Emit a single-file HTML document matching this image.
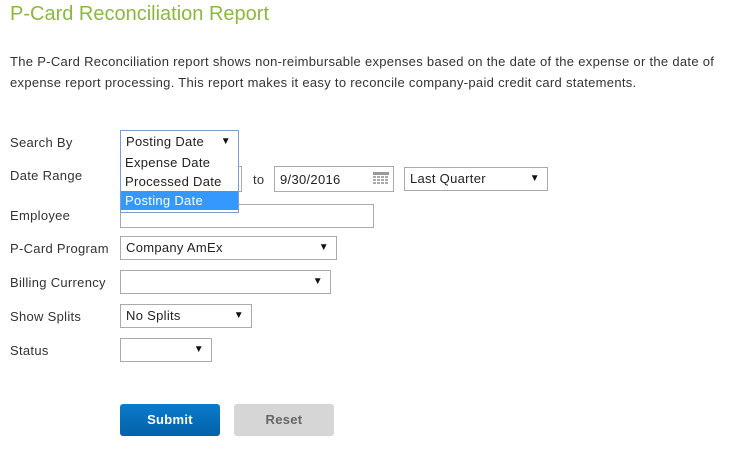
<!DOCTYPE html>
<html><head><style>
body{margin:0;width:730px;height:454px;background:#fff;font-family:"Liberation Sans",sans-serif;color:#333;position:relative;overflow:hidden;letter-spacing:0.3px}
.a{position:absolute}
h1{position:absolute;left:10px;top:3px;margin:0;font-weight:normal;font-size:20px;color:#8cb83f;letter-spacing:0}
p{position:absolute;left:10px;top:51px;margin:0;font-size:13px;line-height:21px;width:718px;color:#333}
.l{position:absolute;left:10px;font-size:13px;color:#333;top:0}
.box{position:absolute;border:1px solid #aaa;background:#fff;font-size:13px;box-sizing:border-box;padding-left:5px;line-height:22px;height:24px;color:#222}
.arr{position:absolute;right:7px;top:0;font-size:10px;color:#111}
.btn{position:absolute;top:404px;height:32px;border-radius:3px;font-size:13px;font-weight:bold;text-align:center;line-height:32px}
</style></head><body>
<h1>P-Card Reconciliation Report</h1>
<p>The P-Card Reconciliation report shows non-reimbursable expenses based on the date of the expense or the date of expense report processing. This report makes it easy to reconcile company-paid credit card statements.</p>
<div class="l" style="top:135px">Search By</div>
<div class="l" style="top:168px">Date Range</div>
<div class="l" style="top:208px">Employee</div>
<div class="l" style="top:241px">P-Card Program</div>
<div class="l" style="top:275px">Billing Currency</div>
<div class="l" style="top:309px">Show Splits</div>
<div class="l" style="top:343px">Status</div>

<div class="box" style="left:223px;top:166px;width:19px;height:26px"></div>
<div class="a" style="left:253px;top:172px;font-size:13px">to</div>
<div class="box" style="left:274px;top:166px;width:120px;height:26px;line-height:25px">9/30/2016
<svg class="a" style="right:4px;top:5px" width="16" height="15"><rect x="0" y="0" width="16" height="3" fill="#999"/><g fill="#aaa"><rect x="0" y="4" width="3" height="2"/><rect x="4" y="4" width="3" height="2"/><rect x="8" y="4" width="3" height="2"/><rect x="12" y="4" width="3" height="2"/><rect x="0" y="7" width="3" height="2"/><rect x="4" y="7" width="3" height="2"/><rect x="8" y="7" width="3" height="2"/><rect x="12" y="7" width="3" height="2"/><rect x="0" y="10" width="3" height="2"/><rect x="4" y="10" width="3" height="2"/><rect x="8" y="10" width="3" height="2"/><rect x="12" y="10" width="3" height="2"/></g></svg></div>
<div class="box" style="left:404px;top:167px;width:144px">Last Quarter<span class="arr">&#9660;</span></div>
<div class="box" style="left:120px;top:204px;width:254px"></div>
<div class="box" style="left:120px;top:236px;width:217px">Company AmEx<span class="arr">&#9660;</span></div>
<div class="box" style="left:120px;top:270px;width:211px"><span class="arr">&#9660;</span></div>
<div class="box" style="left:120px;top:304px;width:132px">No Splits<span class="arr">&#9660;</span></div>
<div class="box" style="left:120px;top:338px;width:92px"><span class="arr">&#9660;</span></div>

<div class="box" style="left:120px;top:130px;width:119px;border-color:#7a9cd3">Posting Date<span class="arr">&#9660;</span></div>
<div class="a" style="left:120px;top:153px;width:119px;height:60px;border:1px solid #7a9cd3;border-top:none;background:#fff;box-sizing:border-box;font-size:13px;color:#222">
<div style="padding-left:4px;line-height:19px">Expense Date</div>
<div style="padding-left:4px;line-height:19px">Processed Date</div>
<div style="padding-left:4px;line-height:19px;background:#3399ff;color:#fff">Posting Date</div>
</div>

<div class="btn" style="left:120px;width:100px;background:linear-gradient(#0a7ccb,#0361a8);color:#fff">Submit</div>
<div class="btn" style="left:234px;width:100px;background:#d6d6d6;color:#666">Reset</div>
</body></html>
